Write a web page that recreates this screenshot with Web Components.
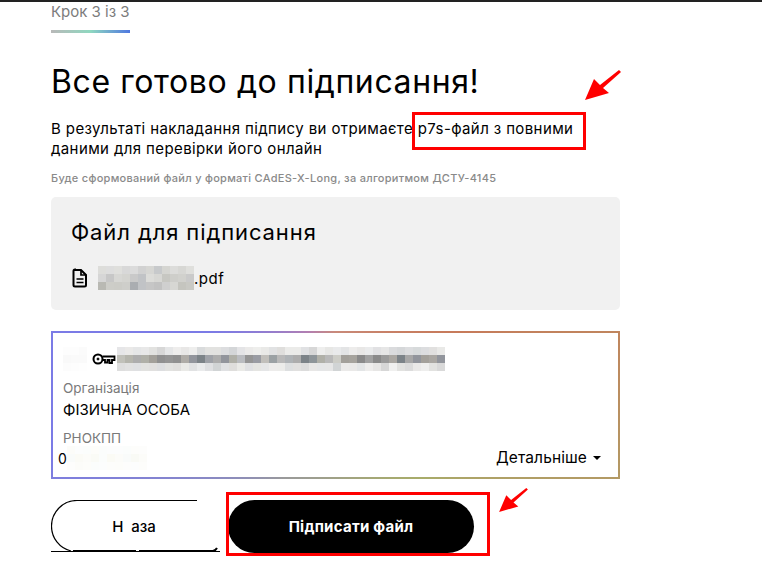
<!DOCTYPE html>
<html lang="uk">
<head>
<meta charset="utf-8">
<title>Крок 3 із 3</title>
<style>
  html, body { margin: 0; background: #fff; }
  body { font-family: Inter, "Liberation Sans", sans-serif; color: #000; }
</style>
</head>
<body>
<sign-page></sign-page>

<script>
// mosaic used for the blurred out personal data
class PixelBlur extends HTMLElement {
  connectedCallback() {
    const cols = +this.getAttribute("cols");
    const rows = (this.getAttribute("rows") || "").split("|");
    const size = +this.getAttribute("size") || 8;
    const colors = (this.getAttribute("colors") || "#999,#aaa,#888").split(",");
    let seed = +this.getAttribute("seed") || 7;
    const root = this.attachShadow({ mode: "open" });
    let cells = "";
    rows.forEach((strength) => {
      for (let i = 0; i < cols; i++) {
        seed = (seed * 137 + 59) % 251;
        const c = colors[seed % colors.length];
        const o = Math.min(1, +strength * (0.6 + (seed % 60) / 100)).toFixed(2);
        cells += `<i style="background:${c};opacity:${o}"></i>`;
      }
    });
    root.innerHTML = `
      <style>
        :host { display: inline-grid; grid-template-columns: repeat(${cols}, ${size}px); grid-auto-rows: ${size}px; flex: none; }
        i { display: block; }
      </style>${cells}`;
  }
}
customElements.define("pixel-blur", PixelBlur);

class StepHeader extends HTMLElement {
  constructor() {
    super();
    this.attachShadow({ mode: "open" }).innerHTML = `
      <style>
        :host { display: block; }
        .label { font-size: 15px; line-height: 20px; color: #7c7c7c; }
        .line { width: 79px; height: 3px; margin-top: 8px; background: linear-gradient(90deg, #b9b9b9 0%, #8fd8c0 50%, #4f78e0 100%); }
      </style>
      <div class="label"><slot></slot></div>
      <div class="line"></div>`;
  }
}
customElements.define("step-header", StepHeader);

class FileCard extends HTMLElement {
  constructor() {
    super();
    this.attachShadow({ mode: "open" }).innerHTML = `
      <style>
        :host { display: block; background: #f1f1f1; border-radius: 5px; padding: 21px 20px 21px; height: 113px; box-sizing: border-box; }
        h3 { margin: 0; font-size: 22px; line-height: 28px; font-weight: 400; letter-spacing: .9px; }
        .row { display: flex; align-items: center; margin-top: 20px; height: 24px; font-size: 15px; letter-spacing: .5px; }
        svg { width: 18px; height: 20px; margin-right: 9px; flex: none; }
      </style>
      <h3>Файл для підписання</h3>
      <div class="row">
        <svg viewBox="0 0 18 20" fill="none" stroke="#000" stroke-width="2"><path d="M4 2h6l5 5v10a1.500 1.500 0 0 1-1.500 1.500h-9.500a1.500 1.500 0 0 1-1.500-1.500v-14a1.500 1.500 0 0 1 1.500-1.500z"/><path d="M10 2v5h5M5.500 11h7M5.500 14.500h7" stroke-width="1.700"/></svg>
        <slot name="blur"></slot><span>.pdf</span>
      </div>`;
  }
}
customElements.define("file-card", FileCard);

class KeyBox extends HTMLElement {
  constructor() {
    super();
    this.attachShadow({ mode: "open" }).innerHTML = `
      <style>
        :host { display: block; position: relative; height: 148px; box-sizing: border-box; border: 2px solid; border-image: conic-gradient(from 0deg, #c98a7a 0deg, #c77a5a 60deg, #a8ac6a 130deg, #9a9a9a 215deg, #7b7be6 260deg, #7b7be6 300deg, #b37fb0 340deg, #c98a7a 360deg) 1; padding: 12px 0 0 10px; }
        .head { display: flex; align-items: center; height: 27px; }
        svg { width: 24px; height: 12px; margin: 0 1px 0 5px; flex: none; }
        .cap { font-size: 13.500px; line-height: 16px; color: #7a7a7a; }
        .val { font-size: 15px; line-height: 20px; margin-top: 4px; }
        .org { margin-top: 8px; }
        .inn { margin-top: 10px; }
        .num { display: flex; align-items: center; margin-left: -5px; margin-top: 2px; height: 20px; font-size: 14px; }
        .more { position: absolute; right: 17px; bottom: 9px; display: flex; align-items: center; gap: 6px; font-size: 15.500px; line-height: 20px; letter-spacing: .1px; }
        .tri { width: 0; height: 0; border: 4.500px solid transparent; border-top-color: #000; border-bottom: 0; }
      </style>
      <div class="head">
        <slot name="ghost"></slot>
        <svg viewBox="0 0 24 12" fill="none" stroke="#000" stroke-width="2"><circle cx="6" cy="6" r="4.500"/><circle cx="6" cy="6" r="1" fill="#000" stroke-width="1"/><path d="M10.500 3.500h12v3.500h-2.500v3h-2.500v-3h-2v2.500h-2.500v-2.500h-2.500" stroke-width="1.800"/></svg>
        <slot name="name"></slot>
      </div>
      <div class="org cap">Організація</div>
      <div class="val">ФІЗИЧНА ОСОБА</div>
      <div class="inn cap">РНОКПП</div>
      <div class="num"><span>0</span><slot name="code"></slot></div>
      <div class="more">Детальніше <span class="tri"></span></div>`;
  }
}
customElements.define("key-box", KeyBox);

class BackButton extends HTMLElement {
  constructor() {
    super();
    this.attachShadow({ mode: "open" }).innerHTML = `
      <style>
        :host { display: flex; position: relative; width: 170px; height: 53px; align-items: center; justify-content: center; font-size: 15px; font-weight: 500; box-sizing: border-box; padding-right: 4px; white-space: pre; }
        svg { position: absolute; left: 0; top: 0; width: 170px; height: 53px; }
      </style>
      <svg viewBox="0 0 170 53" fill="none" stroke="#000">
        <path d="M146 .5H26A25.500 25.500 0 0 0 .5 26 25.500 25.500 0 0 0 20 51" stroke-width="1.200"/>
        <path d="M0 51.500H169" stroke-width="1"/>
        <path d="M22 51h63M88 51h74q3-1 4-3" stroke-width="2"/>
      </svg>
      <slot></slot>`;
  }
}
customElements.define("back-button", BackButton);

class SignButton extends HTMLElement {
  constructor() {
    super();
    this.attachShadow({ mode: "open" }).innerHTML = `
      <style>
        :host { display: flex; width: 246px; height: 53px; align-items: center; justify-content: center; background: #000; color: #fff; border-radius: 27px; font-size: 15px; font-weight: 700; letter-spacing: .25px; }
      </style>
      <slot></slot>`;
  }
}
customElements.define("sign-button", SignButton);

// red annotations painted on top of the screenshot
class RedMark extends HTMLElement {
  constructor() {
    super();
    const x = this.getAttribute("x"), y = this.getAttribute("y");
    const w = this.getAttribute("w"), h = this.getAttribute("h");
    this.attachShadow({ mode: "open" }).innerHTML = `
      <style>
        :host { position: absolute; left: ${x}px; top: ${y}px; width: ${w}px; height: ${h}px; box-sizing: border-box; border: 3px solid #f00; }
      </style>`;
  }
}
customElements.define("red-mark", RedMark);

class RedArrow extends HTMLElement {
  constructor() {
    super();
    const x = this.getAttribute("x"), y = this.getAttribute("y");
    const w = this.getAttribute("w"), h = this.getAttribute("h");
    this.attachShadow({ mode: "open" }).innerHTML = `
      <style>
        :host { position: absolute; left: ${x}px; top: ${y}px; width: ${w}px; height: ${h}px; }
        svg { display: block; width: 100%; height: 100%; }
      </style>
      <svg viewBox="0 0 36 30" fill="#f00"><path d="M0 30 L9 9 L15 15 L34 0 L36 2 L18 18 L24 23 Z"/></svg>`;
  }
}
customElements.define("red-arrow", RedArrow);

class SignPage extends HTMLElement {
  constructor() {
    super();
    this.attachShadow({ mode: "open" }).innerHTML = `
      <style>
        :host { display: block; position: relative; height: 569px; box-sizing: border-box; border-top: 2px solid #222; padding: 0 142px 0 51px; overflow: hidden; }
        h1 { margin: 27px 0 0; font-size: 32px; line-height: 44px; font-weight: 400; letter-spacing: .6px; }
        p { margin: 15px 0 0; font-size: 15px; line-height: 20px; width: 535px; letter-spacing: .39px; }
        small { display: block; margin-top: 11px; font-size: 11px; line-height: 16px; color: #8a8a8a; font-weight: 500; letter-spacing: .28px; white-space: nowrap; }
        file-card { margin-top: 11px; }
        key-box { margin-top: 21px; }
        .actions { display: flex; margin-top: 21px; gap: 7px; }
      </style>
      <step-header>Крок 3 із 3</step-header>
      <h1>Все готово до підписання!</h1>
      <p>В результаті накладання підпису ви отримаєте p7s-файл з повними даними для перевірки його онлайн</p>
      <small>Буде сформований файл у форматі CAdES-X-Long, за алгоритмом ДСТУ-4145</small>
      <file-card>
        <pixel-blur slot="blur" cols="12" size="8" seed="11" rows=".55|.8|.9" colors="#b5b5ae,#c5c5bf,#a9acb0,#bcbcbc"></pixel-blur>
      </file-card>
      <key-box>
        <pixel-blur slot="ghost" cols="3" size="8" seed="5" rows=".04|.07|.04" colors="#999,#bbb"></pixel-blur>
        <pixel-blur slot="name" cols="41" size="8" seed="23" rows=".3|1|.3" colors="#8a8a8a,#7c8388,#a3a09a,#92959c,#b0b0a8"></pixel-blur>
        <pixel-blur slot="code" cols="10" size="8" seed="3" rows=".06|.1|.06" colors="#c8d0a0,#b8d8c8,#d8d8a8"></pixel-blur>
      </key-box>
      <div class="actions">
        <back-button>Н  аза</back-button>
        <sign-button>Підписати файл</sign-button>
      </div>
      <red-mark x="412" y="110" w="174" h="38"></red-mark>
      <red-mark x="226" y="490" w="264" h="64"></red-mark>
      <red-arrow x="585" y="68" w="36" h="30"></red-arrow>
      <red-arrow x="499" y="486" w="29" h="24"></red-arrow>`;
  }
}
customElements.define("sign-page", SignPage);
</script>
</body>
</html>
